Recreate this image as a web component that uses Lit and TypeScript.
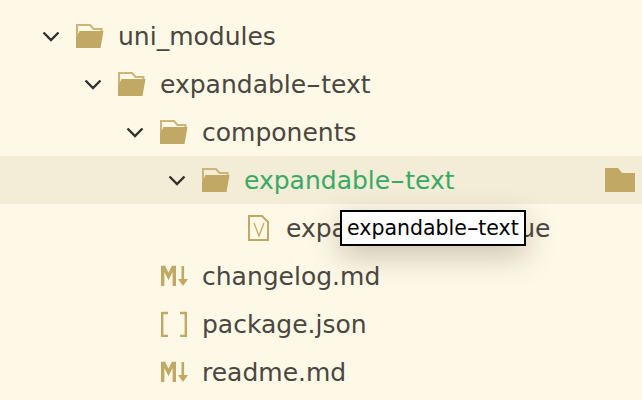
import { LitElement, html, css, svg } from 'lit';
import { customElement } from 'lit/decorators.js';

type Kind = 'folder' | 'vue' | 'md' | 'json';

interface TreeRow {
  name: string;
  depth: number;
  kind: Kind;
  selected?: boolean;
}

const ROWS: TreeRow[] = [
  { name: 'uni_modules', depth: 0, kind: 'folder' },
  { name: 'expandable-text', depth: 1, kind: 'folder' },
  { name: 'components', depth: 2, kind: 'folder' },
  { name: 'expandable-text', depth: 3, kind: 'folder', selected: true },
  { name: 'expandable-text.vue', depth: 4, kind: 'vue' },
  { name: 'changelog.md', depth: 2, kind: 'md' },
  { name: 'package.json', depth: 2, kind: 'json' },
  { name: 'readme.md', depth: 2, kind: 'md' },
];

const GOLD = '#c2a865';

const ICONS: Record<Kind, unknown> = {
  folder: svg`<svg width="28" height="26" viewBox="0 0 28 26">
    <path d="M1 24V2h13l3.500 4h8v4" fill="none" stroke="#cdb57a" stroke-width="2"/>
    <path d="M0 25V15l3.500-7H27.500L24.500 25z" fill="${GOLD}"/>
  </svg>`,
  vue: svg`<svg width="28" height="26" viewBox="0 0 28 26">
    <path d="M5 1h13l6 6v18H5z" fill="none" stroke="${GOLD}" stroke-width="2"/>
    <path d="M10 8l5 13 5-13" fill="none" stroke="${GOLD}" stroke-width="1.300"/>
  </svg>`,
  md: svg`<svg width="28" height="26" viewBox="0 0 28 26">
    <path d="M2.700 23V4.500h1.300l4.500 9 4.500-9h1.300V23" fill="none" stroke="${GOLD}" stroke-width="3.400"/>
    <path d="M22.800 3v15" fill="none" stroke="${GOLD}" stroke-width="2.600"/>
    <path d="M18 16h10l-5 7z" fill="${GOLD}"/>
  </svg>`,
  json: svg`<svg width="28" height="26" viewBox="0 0 28 26">
    <path d="M8 2H2.200v23H8M20 2h5.800v23H20" fill="none" stroke="${GOLD}" stroke-width="2.400"/>
  </svg>`,
};

// the reference font draws a much wider hyphen than DejaVu does
const withDash = (text: string) => {
  const [head, ...rest] = text.split('-');
  return rest.length ? html`${head}<span class="dash">-</span>${rest.join('-')}` : text;
};

@customElement('app-root')
export class AppRoot extends LitElement {
  static styles = css`
    :host {
      display: block;
      position: relative;
      width: 642px;
      height: 400px;
      overflow: hidden;
      box-sizing: border-box;
      padding-top: 12px;
      background: #fef8e7;
      font-family: 'DejaVu Sans', 'Open Sans', sans-serif;
    }

    .row {
      display: flex;
      align-items: center;
      height: 48px;
      font-size: 25px;
      color: #4a4640;
      white-space: nowrap;
    }

    .row.selected {
      background: #f3ecd7;
      color: #3aa963;
    }

    .twisty {
      width: 26px;
      height: 26px;
      margin-right: 12px;
      flex: none;
    }

    .icon {
      width: 28px;
      height: 26px;
      margin-right: 14px;
      flex: none;
    }

    .name {
      flex: 1;
    }

    .dash {
      display: inline-block;
      padding: 0 3px;
      transform: scaleX(1.7);
    }

    .mark {
      width: 30px;
      height: 24px;
      margin-right: 7px;
      flex: none;
    }

    .tooltip {
      position: absolute;
      left: 340px;
      top: 210px;
      width: 186px;
      height: 36px;
      box-sizing: border-box;
      padding-left: 5px;
      display: flex;
      align-items: center;
      background: #fff;
      border: 2px solid #000;
      font-size: 20.500px;
      color: #000;
      white-space: nowrap;
      box-shadow: 0 10px 30px rgba(70, 60, 30, 0.28);
    }

    .tooltip .dash {
      padding: 0 2px;
    }
  `;

  private renderRow(row: TreeRow) {
    const indent = 38 + row.depth * 42;
    const isFolder = row.kind === 'folder';
    return html`
      <div class="row ${row.selected ? 'selected' : ''}" style="padding-left:${indent}px">
        <span class="twisty">
          ${isFolder
            ? html`<svg width="26" height="26" viewBox="0 0 26 26">
                <path d="M5.500 9.500l7.500 7.500 7.500-7.500" fill="none" stroke="#33312c" stroke-width="2.400"/>
              </svg>`
            : ''}
        </span>
        <span class="icon">${ICONS[row.kind]}</span>
        <span class="name">${withDash(row.name)}</span>
        ${row.selected
          ? html`<svg class="mark" viewBox="0 0 30 24">
              <path d="M0 0h13l4 5h13v19H0z" fill="${GOLD}"/>
            </svg>`
          : ''}
      </div>
    `;
  }

  render() {
    return html`
      ${ROWS.map((row) => this.renderRow(row))}
      <div class="tooltip">${withDash('expandable-text')}</div>
    `;
  }
}
